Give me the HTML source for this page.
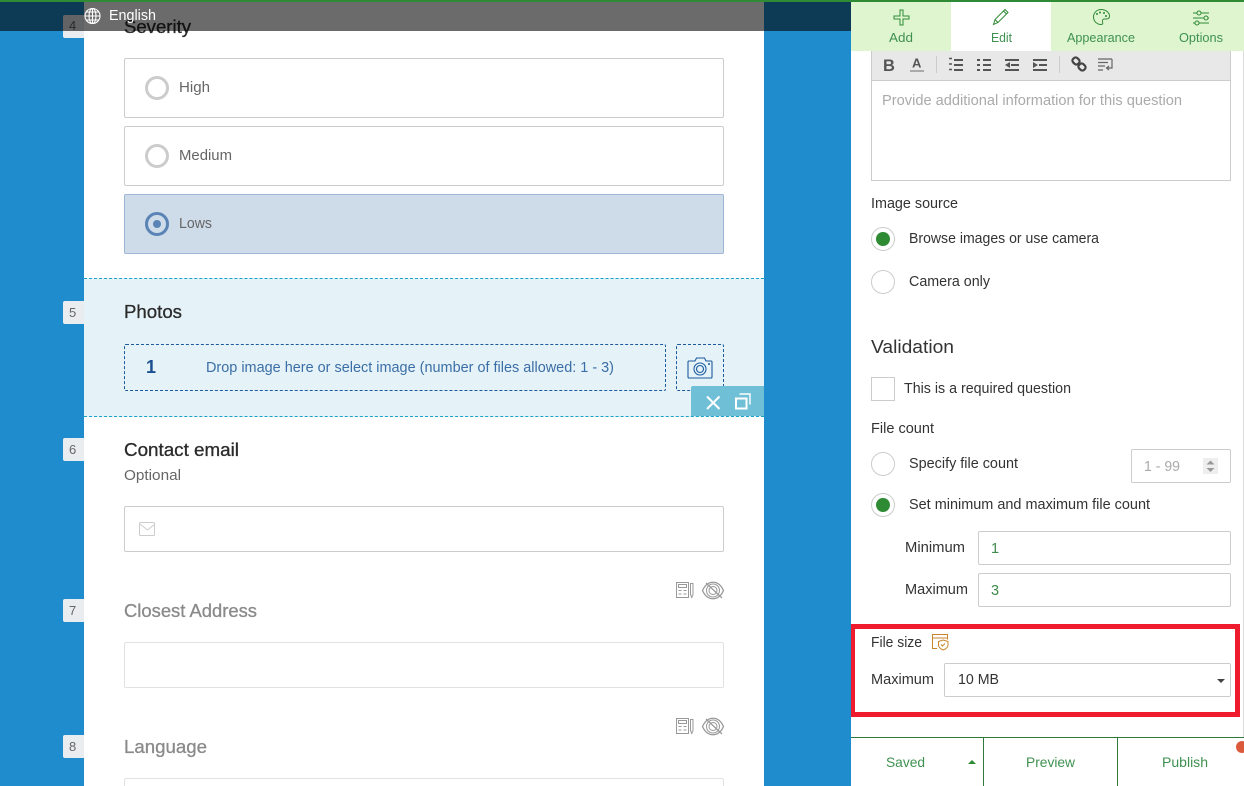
<!DOCTYPE html>
<html><head><meta charset="utf-8"><style>
html,body{margin:0;padding:0;width:1244px;height:786px;overflow:hidden;background:#fff}
div{position:absolute;box-sizing:border-box}
svg{position:absolute;left:0;top:0}
text{font-family:"Liberation Sans",sans-serif;font-size:14.5px;fill:#666}
.box{background:#fff;border:1px solid #ccc;border-radius:2px}
.tag{left:63px;width:21px;height:23px;background:#e9edf0;border-radius:2px 0 0 2px}
.m{stroke:#2b2b2b;stroke-width:.3px;fill:#2b2b2b;font-size:18px}
.g{fill:#3f9150;font-size:13px}
.k{fill:#333}
</style></head><body>
<div style="left:0;top:0;width:1244px;height:786px;overflow:hidden">
<div style="left:0;top:0;width:851px;height:786px;background:#1f8dcd"></div>
<div style="left:84px;top:0;width:680px;height:786px;background:#fff"></div>
<div class="tag" style="top:15px"></div><div class="tag" style="top:301px"></div><div class="tag" style="top:438px"></div><div class="tag" style="top:599px"></div><div class="tag" style="top:735px"></div>
<div class="box" style="left:124px;top:58px;width:600px;height:60px"></div>
<div class="box" style="left:124px;top:126px;width:600px;height:60px"></div>
<div class="box" style="left:124px;top:194px;width:600px;height:60px;background:#cedbe9;border-color:#9db7d6"></div>
<div style="left:145px;top:76px;width:24px;height:24px;border:3px solid #ccc;border-radius:50%"></div>
<div style="left:145px;top:144px;width:24px;height:24px;border:3px solid #ccc;border-radius:50%"></div>
<div style="left:145px;top:212px;width:24px;height:24px;border:3px solid #5a84b6;border-radius:50%"></div>
<div style="left:153px;top:220px;width:8px;height:8px;background:#5a84b6;border-radius:50%"></div>
<div style="left:84px;top:278px;width:680px;height:139px;background:#e5f3f9;border-top:1px dashed #1aa3c9;border-bottom:1px dashed #1aa3c9"></div>
<div style="left:124px;top:344px;width:542px;height:47px;border:1px dashed #1c5a9e;border-radius:2px"></div>
<div style="left:676px;top:344px;width:48px;height:47px;border:1px dashed #1c5a9e;border-radius:2px"></div>
<div style="left:691px;top:386px;width:73px;height:30px;background:#6fc0d6;border-radius:2px 0 0 0"></div>
<div class="box" style="left:124px;top:506px;width:600px;height:46px"></div>
<div class="box" style="left:124px;top:642px;width:600px;height:46px;border-color:#e2e2e2"></div>
<div class="box" style="left:124px;top:778px;width:600px;height:46px;border-color:#e2e2e2"></div>
<svg width="851" height="786" viewBox="0 0 851 786">
<text x="124" y="33" textLength="67" lengthAdjust="spacingAndGlyphs" class="m">Severity</text>
<text x="179" y="92" textLength="31" lengthAdjust="spacingAndGlyphs">High</text>
<text x="179" y="160" textLength="53" lengthAdjust="spacingAndGlyphs">Medium</text>
<text x="179" y="228" textLength="33" lengthAdjust="spacingAndGlyphs">Lows</text>
<text x="124" y="318" textLength="58" lengthAdjust="spacingAndGlyphs" class="m">Photos</text>
<text x="146" y="373" textLength="9" style="font-size:18px;fill:#1c4f8f;font-weight:bold">1</text>
<text x="206" y="372" textLength="408" lengthAdjust="spacingAndGlyphs" style="fill:#3b6ea5">Drop image here or select image (number of files allowed: 1 - 3)</text>
<text x="124" y="456" textLength="115" lengthAdjust="spacingAndGlyphs" class="m">Contact email</text>
<text x="124" y="480" textLength="57" lengthAdjust="spacingAndGlyphs">Optional</text>
<text x="124" y="617" textLength="133" lengthAdjust="spacingAndGlyphs" class="m" style="fill:#8a8a8a;stroke:#8a8a8a">Closest Address</text>
<text x="124" y="753" textLength="83" lengthAdjust="spacingAndGlyphs" class="m" style="fill:#8a8a8a;stroke:#8a8a8a">Language</text>
<text x="69" y="317" style="font-size:13px;fill:#666">5</text>
<text x="69" y="454" style="font-size:13px;fill:#666">6</text>
<text x="69" y="615" style="font-size:13px;fill:#666">7</text>
<text x="69" y="751" style="font-size:13px;fill:#666">8</text>
<text x="69" y="30" style="font-size:13px;fill:#666">4</text>
<g fill="none" stroke="#1c5a9e" stroke-width="1.100">
<path d="M689 361h6l1.500-3h8l1.500 3h5a1 1 0 0 1 1 1v15a1 1 0 0 1-1 1h-22a1 1 0 0 1-1-1v-15a1 1 0 0 1 1-1z"/>
<circle cx="700" cy="369" r="6"/><circle cx="700" cy="369" r="3.500"/>
</g><circle cx="709" cy="364" r="1" fill="#1c5a9e"/>
<g fill="none" stroke="#fff">
<path d="M707 396.500l12.500 12.500M719.500 396.500l-12.500 12.500" stroke-width="2"/>
<path d="M736 398.500h10.500v10h-10.500z" stroke-width="2"/><path d="M739.500 394h10.500v10.500" stroke-width="1.400"/>
</g>
<g fill="none" stroke="#ccc"><rect x="139.500" y="522.500" width="15" height="13" rx="1"/><path d="M140 524l7.500 6 7.500-6"/></g>
<g fill="none" stroke="#999">
<path d="M676.500 582.500h12v15h-12zM678.500 584.500h8v3h-8zM678.500 590.500h3M683.500 590.500h3M678.500 594h3M683.500 594h3"/>
<path d="M690.500 583.500h2.500v11l-1.250 3-1.250-3z"/>
<path d="M702.500 590.500c5-11 16-11 21 0c-5 11-16 11-21 0z" stroke-width="1.300"/><circle cx="713" cy="590.500" r="4"/><circle cx="713" cy="590.500" r="6.500"/><path d="M706 583l16 15" stroke-width="1.200"/>
</g>
<g fill="none" stroke="#999">
<path d="M676.500 718.500h12v15h-12zM678.500 720.500h8v3h-8zM678.500 726.500h3M683.500 726.500h3M678.500 730h3M683.500 730h3"/>
<path d="M690.500 719.500h2.500v11l-1.250 3-1.250-3z"/>
<path d="M702.500 726.500c5-11 16-11 21 0c-5 11-16 11-21 0z" stroke-width="1.300"/><circle cx="713" cy="726.500" r="4"/><circle cx="713" cy="726.500" r="6.500"/><path d="M706 719l16 15" stroke-width="1.200"/>
</g>
</svg>
<div style="left:0;top:0;width:851px;height:31px;background:rgba(0,0,0,.58)"></div>

<div style="left:851px;top:0;width:393px;height:786px;background:#fff;border-right:1px solid #ddd"></div>
<div style="left:851px;top:1px;width:393px;height:50px;background:#def5d0"></div>
<div style="left:951px;top:1px;width:100px;height:50px;background:#fff"></div>
<div style="left:871px;top:51px;width:360px;height:130px;background:#fff;border:1px solid #ccc;border-top:0"></div>
<div style="left:872px;top:51px;width:358px;height:30px;background:#e8e8e8;border-bottom:1px solid #ccc"></div>
<div style="left:871px;top:227px;width:24px;height:24px;border:1px solid #ccc;border-radius:50%"></div>
<div style="left:876px;top:232px;width:14px;height:14px;background:#2f8a34;border-radius:50%"></div>
<div style="left:871px;top:270px;width:24px;height:24px;border:1px solid #ccc;border-radius:50%"></div>
<div style="left:871px;top:377px;width:24px;height:24px;border:1px solid #ccc"></div>
<div style="left:871px;top:452px;width:24px;height:24px;border:1px solid #ccc;border-radius:50%"></div>
<div style="left:871px;top:493px;width:24px;height:24px;border:1px solid #ccc;border-radius:50%"></div>
<div style="left:876px;top:498px;width:14px;height:14px;background:#2f8a34;border-radius:50%"></div>
<div class="box" style="left:1131px;top:449px;width:100px;height:34px"></div>
<div style="left:1203px;top:458px;width:15px;height:16px;background:#eee"></div>
<div class="box" style="left:978px;top:531px;width:253px;height:34px"></div>
<div class="box" style="left:978px;top:573px;width:253px;height:34px"></div>
<div class="box" style="left:944px;top:663px;width:287px;height:34px"></div>
<div style="left:851px;top:624px;width:389px;height:93px;border:5px solid #ee1c2e;border-left-width:4px"></div>
<div style="left:851px;top:737px;width:393px;height:49px;background:#fff;border-top:1px solid #2f7a3a"></div>
<div style="left:983px;top:737px;width:1px;height:49px;background:#2f7a3a"></div>
<div style="left:1117px;top:737px;width:1px;height:49px;background:#2f7a3a"></div>
<div style="left:1236px;top:741px;width:12px;height:12px;background:#dc5a3c;border-radius:50%"></div>

<svg width="1244" height="786" viewBox="0 0 1244 786">
<text x="109" y="20" textLength="47" lengthAdjust="spacingAndGlyphs" style="fill:#fff">English</text>
<g fill="none" stroke="#fff" stroke-width="1.100"><circle cx="92.500" cy="16" r="7.500"/><ellipse cx="92.500" cy="16" rx="3.500" ry="7.500"/><path d="M92.500 8.500v15M85 16h15M86 12h13M86 20h13"/></g>
<g fill="none" stroke="#2f8a34" stroke-width="1">
<path d="M900 10h3v6h6v3h-6v6h-3v-6h-6v-3h6z"/>
<path d="M993.500 24.500l1.500-5 10-10 3 3-10 10zM1003.500 11l3 3M995 19.500l3 3"/>
<path d="M1101 9.500a7.500 7.500 0 1 0 0 15c2 0 2-1 1.500-2.500-.5-2 .5-3 2-3h2c2 0 3-1 3-3 0-3.500-4-6.500-8.500-6.500z"/>
<path d="M1193 13h16M1193 18h16M1193 23h16"/><circle cx="1199" cy="13" r="2" fill="#def5d0"/><circle cx="1206" cy="18" r="2" fill="#def5d0"/><circle cx="1197" cy="23" r="2" fill="#def5d0"/>
</g>
<g fill="#2f8a34"><circle cx="1097" cy="14" r="1"/><circle cx="1100" cy="12.500" r="1"/><circle cx="1104" cy="13" r="1"/><circle cx="1106" cy="16" r="1"/></g>
<text x="889" y="42" textLength="24" lengthAdjust="spacingAndGlyphs" class="g">Add</text>
<text x="991" y="42" textLength="21" lengthAdjust="spacingAndGlyphs" class="g">Edit</text>
<text x="1067" y="42" textLength="68" lengthAdjust="spacingAndGlyphs" class="g">Appearance</text>
<text x="1179" y="42" textLength="44" lengthAdjust="spacingAndGlyphs" class="g">Options</text>

<text x="883" y="71" style="font-size:16.500px;font-weight:bold;fill:#555">B</text>
<text x="912" y="67.500" style="font-size:13px;font-weight:bold;fill:#555">A</text>
<path d="M910 71h14" stroke="#aaa" stroke-width="2"/>
<path d="M936.500 56v17M1059.500 56v17" stroke="#ccc"/>
<g stroke="#555" stroke-width="2" fill="none">
<path d="M954 60h9M954 65h9M954 70h9"/><path d="M977 60h3M983 60h8M977 65h3M983 65h8M977 70h3M983 70h8"/>
<path d="M1005 60h14M1011 65h8M1005 70h14M1033 60h14M1039 65h8M1033 70h14"/>
</g>
<path d="M949 58.500h3M949 64h3M949 69.500h3" stroke="#555" stroke-width="1.500"/>
<path d="M1010 62v6l-5-3zM1033 62v6l5-3z" fill="#555"/>
<g fill="none" stroke="#444" stroke-width="2.200"><rect x="1072.500" y="58" width="7" height="6" rx="2.500" transform="rotate(45 1076 61)"/><rect x="1078.500" y="64" width="7" height="6" rx="2.500" transform="rotate(45 1082 67)"/></g>
<path d="M1098 59h14M1098 62.500h10M1098 66h7M1098 70h5M1112 59v9h-5M1109 66l-2.500 2 2.500 2" stroke="#666" stroke-width="1.200" fill="none"/>
<text x="882" y="105" textLength="300" lengthAdjust="spacingAndGlyphs" style="fill:#aaa">Provide additional information for this question</text>

<text x="871" y="208" textLength="87" lengthAdjust="spacingAndGlyphs" class="k">Image source</text>
<text x="909" y="243" textLength="190" lengthAdjust="spacingAndGlyphs" class="k">Browse images or use camera</text>
<text x="909" y="286" textLength="81" lengthAdjust="spacingAndGlyphs" class="k">Camera only</text>
<text x="871" y="353" textLength="83" lengthAdjust="spacingAndGlyphs" class="k" style="font-size:18px">Validation</text>
<text x="904" y="393" textLength="167" lengthAdjust="spacingAndGlyphs" class="k">This is a required question</text>
<text x="871" y="433" textLength="63" lengthAdjust="spacingAndGlyphs" class="k">File count</text>
<text x="909" y="468" textLength="109" lengthAdjust="spacingAndGlyphs" class="k">Specify file count</text>
<text x="909" y="509" textLength="241" lengthAdjust="spacingAndGlyphs" class="k">Set minimum and maximum file count</text>
<text x="1144" y="471" textLength="36" lengthAdjust="spacingAndGlyphs" style="fill:#aaa">1 - 99</text>
<path d="M1210.500 460.500l-4 4h8zM1210.500 472l-4-4h8z" fill="#999"/>
<text x="905" y="552" textLength="60" lengthAdjust="spacingAndGlyphs" class="k">Minimum</text>
<text x="905" y="594" textLength="63" lengthAdjust="spacingAndGlyphs" class="k">Maximum</text>
<text x="991" y="553" style="fill:#3f8a4a">1</text>
<text x="991" y="595" style="fill:#3f8a4a">3</text>
<text x="871" y="647" textLength="51" lengthAdjust="spacingAndGlyphs" class="k">File size</text>
<g fill="none" stroke="#c8862c"><path d="M937 648.500h-4.500v-14h15v5M932.500 638h15"/><path d="M938.500 641.500l4.750-1.500 4.750 1.500v3.500c0 2.500-2.250 4-4.750 5-2.500-1-4.750-2.500-4.750-5z"/><path d="M941 644.500l1.500 1.500 2.500-2.500"/></g>
<text x="871" y="684" textLength="63" lengthAdjust="spacingAndGlyphs" class="k">Maximum</text>
<text x="958" y="684" textLength="41" lengthAdjust="spacingAndGlyphs" class="k">10 MB</text>
<path d="M1217 679h8l-4 4z" fill="#444"/>
<text x="886" y="767" textLength="39" lengthAdjust="spacingAndGlyphs" class="g" style="font-size:14px">Saved</text>
<path d="M968 764l4-4 4 4z" fill="#2f8a34"/>
<text x="1026" y="767" textLength="49" lengthAdjust="spacingAndGlyphs" class="g" style="font-size:14px">Preview</text>
<text x="1162" y="767" textLength="46" lengthAdjust="spacingAndGlyphs" class="g" style="font-size:14px">Publish</text>
</svg>
<div style="left:0;top:0;width:1244px;height:2px;background:#2f8a34"></div>
</div>
</body></html>
